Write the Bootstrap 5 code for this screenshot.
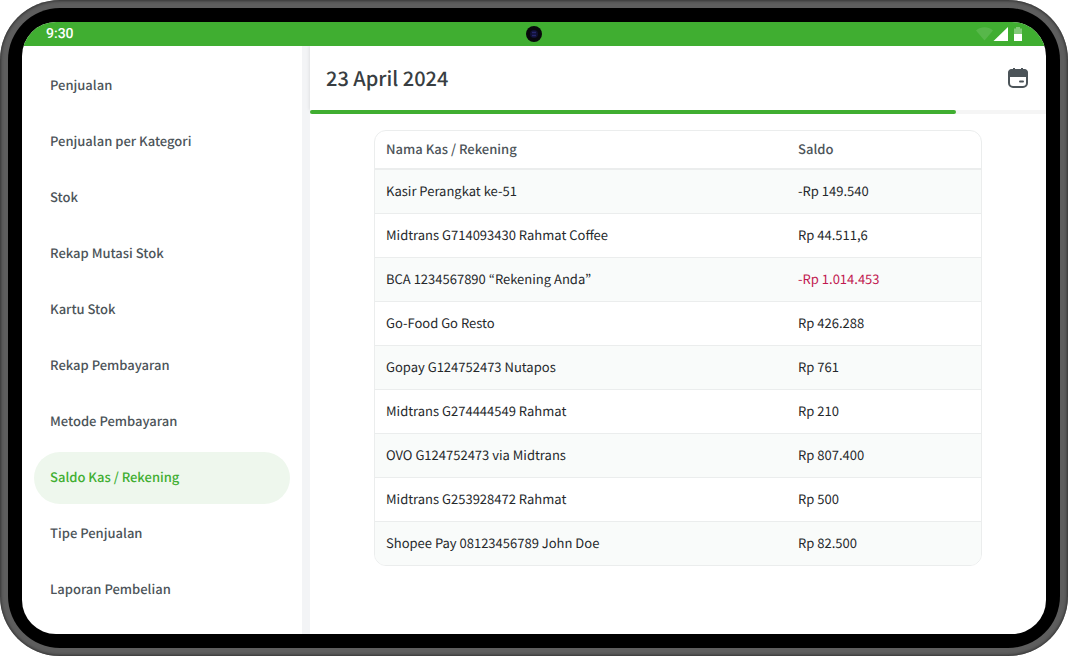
<!DOCTYPE html>
<html lang="id">
<head>
<meta charset="utf-8">
<meta name="viewport" content="width=device-width, initial-scale=1">
<title>Saldo Kas / Rekening</title>
<link href="https://cdn.jsdelivr.net/npm/bootstrap@5.3.0/dist/css/bootstrap.min.css" rel="stylesheet">
<style>
  :root { --brand: #40ae31; --ink: #4c5459; --line: #ebeded; }
  body { font-family: "Noto Sans CJK JP", "Source Sans Pro", sans-serif; font-size: 13px; line-height: 20px; color: #25282b; background: #fff; text-rendering: geometricPrecision; }
  .device { min-height: 100vh; padding: 8px; border-radius: 60px; background: #5e5e5e; box-shadow: inset 0 0 3px 1px #333; }
  .bezel { padding: 14px; border-radius: 52px; background: #000; }
  .screen { border-radius: 34px; background: #fff; overflow: hidden; }
  .statusbar { height: 24px; padding: 0 24px; background: var(--brand); color: #fff; font: 500 14px/24px Roboto, sans-serif; }
  .camera { top: 4px; }
  .sidebar { width: 288px; padding: 14px 12px; border-right: 8px solid #f3f4f6; }
  .sidebar .nav-link { padding: 15px 16px 17px; border-radius: 26px; color: var(--ink); font-weight: 500; }
  .sidebar .nav-link.active { background: #eef7ed; color: var(--brand); }
  .topbar { height: 64px; padding: 0 16px; box-shadow: -1px 0 3px rgba(0,0,0,.08); }
  .topbar h1 { font-size: 20px; line-height: 28px; font-weight: 500; color: #383e42; }
  .progress { height: 4px; border-radius: 0; background: #f5f5f5; }
  .progress-bar { background: var(--brand); border-radius: 2px; }
  .sheet { margin: 16px 64px; border: 1px solid var(--line); border-radius: 12px; overflow: hidden; }
  .sheet table { table-layout: fixed; border-collapse: separate; border-spacing: 0; }
  .sheet th, .sheet td { padding: 11px 11px 12px; font-weight: 400; border-bottom: 1px solid var(--line); }
  .sheet th:first-child { width: 68%; }
  .sheet thead th { padding: 8px 11px 9px; font-weight: 500; color: var(--ink); border-bottom-width: 2px; }
  .sheet tbody tr:nth-child(odd) { background: #f9fbfa; }
  .sheet tbody tr:last-child td { border-bottom: 0; }
  .minus { color: #c1184f; }
</style>
</head>
<body>
<div class="device d-flex flex-column">
 <div class="bezel d-flex flex-column flex-grow-1">
  <div class="screen d-flex flex-column flex-grow-1">
   <header class="statusbar position-relative d-flex justify-content-between align-items-center">
    <span>9:30</span>
    <svg class="camera position-absolute start-50 translate-middle-x" width="16" height="16" viewBox="0 0 16 16" aria-hidden="true"><circle cx="8" cy="8" r="8" fill="#08080c"/><circle cx="8" cy="8" r="4" fill="#101033"/><path d="M6 6.500h4M6 9.500h4" stroke="#25256b" stroke-width="1.500"/></svg>
    <svg width="46" height="16" viewBox="0 0 46 16" aria-hidden="true"><path d="M0 4.500C5 .2 12 .2 17 4.500L8.500 14.500z" fill="#fff" opacity=".12"/><path d="M32 1v14H17.500z" fill="#fff"/><path d="M38 2.500h2V1h4v1.500h2V8h-8z" fill="#fff" opacity=".35"/><path d="M38 8h8v7h-8z" fill="#fff"/></svg>
   </header>
   <div class="d-flex flex-grow-1">
    <nav class="sidebar flex-shrink-0" aria-label="Laporan">
     <div class="nav flex-column gap-1">
      <a class="nav-link" href="#">Penjualan</a>
      <a class="nav-link" href="#">Penjualan per Kategori</a>
      <a class="nav-link" href="#">Stok</a>
      <a class="nav-link" href="#">Rekap Mutasi Stok</a>
      <a class="nav-link" href="#">Kartu Stok</a>
      <a class="nav-link" href="#">Rekap Pembayaran</a>
      <a class="nav-link" href="#">Metode Pembayaran</a>
      <a class="nav-link active" aria-current="page" href="#">Saldo Kas / Rekening</a>
      <a class="nav-link" href="#">Tipe Penjualan</a>
      <a class="nav-link" href="#">Laporan Pembelian</a>
     </div>
    </nav>
    <main class="flex-grow-1">
     <div class="topbar d-flex align-items-center justify-content-between">
      <h1 class="m-0">23 April 2024</h1>
      <button type="button" class="btn p-0 border-0 d-flex" aria-label="Pilih tanggal">
       <svg width="24" height="24" viewBox="0 0 24 24"><rect x="3" y="4" width="18" height="17" rx="4" fill="#fff" stroke="#4c5459" stroke-width="2"/><path d="M2 11V7a4 4 0 0 1 4-4h1V2h2v1h6V2h2v1h1a4 4 0 0 1 4 4v4z" fill="#4c5459"/><path d="M14 15.500h3" stroke="#4c5459" stroke-width="2" stroke-linecap="round"/></svg>
      </button>
     </div>
     <div class="progress" role="progressbar" aria-label="Memuat" aria-valuenow="88" aria-valuemin="0" aria-valuemax="100"><div class="progress-bar" style="width:87.8%"></div></div>
     <div class="sheet">
      <table class="w-100">
       <thead><tr><th scope="col">Nama Kas / Rekening</th><th scope="col">Saldo</th></tr></thead>
       <tbody>
        <tr><td>Kasir Perangkat ke-51</td><td>-Rp 149.540</td></tr>
        <tr><td>Midtrans G714093430 Rahmat Coffee</td><td>Rp 44.511,6</td></tr>
        <tr><td>BCA 1234567890 “Rekening Anda”</td><td class="minus">-Rp 1.014.453</td></tr>
        <tr><td>Go-Food Go Resto</td><td>Rp 426.288</td></tr>
        <tr><td>Gopay G124752473 Nutapos</td><td>Rp 761</td></tr>
        <tr><td>Midtrans G274444549 Rahmat</td><td>Rp 210</td></tr>
        <tr><td>OVO G124752473 via Midtrans</td><td>Rp 807.400</td></tr>
        <tr><td>Midtrans G253928472 Rahmat</td><td>Rp 500</td></tr>
        <tr><td>Shopee Pay 08123456789 John Doe</td><td>Rp 82.500</td></tr>
       </tbody>
      </table>
     </div>
    </main>
   </div>
  </div>
 </div>
</div>
<script src="https://cdn.jsdelivr.net/npm/bootstrap@5.3.0/dist/js/bootstrap.bundle.min.js"></script>
</body>
</html>
